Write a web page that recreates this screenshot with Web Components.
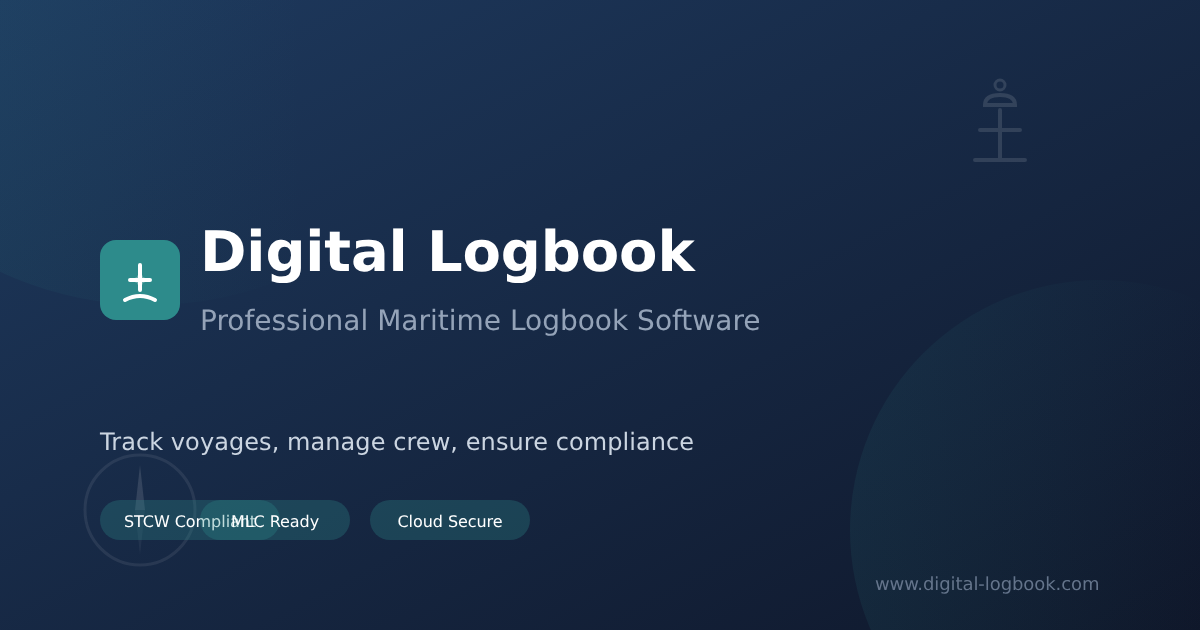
<!DOCTYPE html>
<html lang="en"><head><meta charset="utf-8"><title>Digital Logbook</title>
<style>html,body{margin:0;padding:0;background:#0f172a}</style></head>
<body>
<template id="t-card"><style>
:host{display:block;position:relative;width:1200px;height:630px;overflow:hidden;box-sizing:border-box;padding:222px 100px 0;font-family:"DejaVu Sans",sans-serif;text-rendering:geometricPrecision;background:linear-gradient(to bottom right,#1e3a5f 0%,#0f172a 100%)}
.content{position:relative;display:flex;flex-direction:column;will-change:transform}
</style><slot name="decor"></slot><div class="content"><slot></slot></div></template>

<template id="t-decor"><style>:host{display:block;position:absolute;inset:0}svg{display:block}</style>
<svg width="1200" height="630" viewBox="0 0 1200 630" fill="none" aria-hidden="true">
<defs>
<linearGradient id="tl" x1="0" y1="0" x2=".72" y2="0"><stop offset="0" stop-color="#2d8b8b" stop-opacity=".14"/><stop offset="1" stop-color="#2d8b8b" stop-opacity="0"/></linearGradient>
<linearGradient id="br" x1="0" y1="0" x2=".72" y2="0"><stop offset="0" stop-color="#2d8b8b" stop-opacity=".11"/><stop offset="1" stop-color="#2d8b8b" stop-opacity="0"/></linearGradient>
</defs>
<circle cx="150" cy="-50" r="355" fill="url(#tl)"/>
<circle cx="1100" cy="530" r="250" fill="url(#br)"/>
<g stroke="#fff" stroke-opacity=".12" stroke-width="4" stroke-linecap="round">
<circle cx="1000" cy="85" r="5" stroke-width="3"/>
<path d="M985 105Q985 95 1000 95Q1015 95 1015 105Z"/>
<path d="M1000 110V160M980 130H1020M975 160H1025"/>
<circle cx="140" cy="510" r="55" stroke-width="3" stroke-opacity=".08"/>
</g>
<path d="M140 465L145 510L135 510Z" fill="#fff" fill-opacity=".12"/>
<path d="M140 555L145 510L135 510Z" fill="#fff" fill-opacity=".05"/>
</svg></template>

<template id="t-logo"><style>:host{display:block;flex:none;width:80px;height:80px;margin-top:18px}svg{display:block}</style>
<svg width="80" height="80" viewBox="0 0 80 80" fill="none" aria-hidden="true">
<rect width="80" height="80" rx="16" fill="#2d8b8b"/>
<path d="M40 30L43 37L50 40L43 43L40 50L37 43L30 40L37 37Z" fill="#fff" fill-opacity=".3"/>
<path d="M40 25V50M30 40H50" stroke="#fff" stroke-width="4" stroke-linecap="round"/>
<path d="M25 60Q40 52 55 60" stroke="#fff" stroke-width="4" stroke-linecap="round"/>
</svg></template>

<template id="t-header"><style>
:host{display:flex;align-items:flex-start;gap:20px}
.t{display:flex;flex-direction:column}
h1{margin:0;padding-top:1px;font-size:56px;line-height:60px;font-weight:700;color:#fff;letter-spacing:-.15px}
p{margin:0;padding-top:21px;font-size:28px;line-height:34px;color:#94a3b8}
</style><slot name="logo"></slot><div class="t"><h1><slot name="title"></slot></h1><p><slot name="sub"></slot></p></div></template>

<template id="t-tagline"><style>:host{display:block;margin-top:89px;font-size:24px;line-height:30px;color:#cbd5e1;letter-spacing:.07px}</style><slot></slot></template>

<template id="t-pills"><style>:host{display:flex;gap:20px;margin-top:43px}</style><slot></slot></template>

<template id="t-pill"><style>:host{display:flex;align-items:center;justify-content:center;flex:none;height:40px;width:var(--w,150px);border-radius:20px;background:rgba(45,139,139,.3);color:#fff;font-size:16px;letter-spacing:-.05px;padding-top:2px;box-sizing:border-box;white-space:nowrap}</style><slot></slot></template>

<template id="t-url"><style>:host{display:block;text-align:right;margin-top:33px;padding-right:.5px;font-size:18px;line-height:24px;color:#64748b;letter-spacing:-.07px}</style><slot></slot></template>

<log-card>
<log-decor slot="decor"></log-decor>
<log-header><log-logo slot="logo"></log-logo><span slot="title">Digital Logbook</span><span slot="sub">Professional Maritime Logbook Software</span></log-header>
<log-tagline>Track voyages, manage crew, ensure compliance</log-tagline>
<log-pills>
<log-pill style="--w:180px">STCW Compliant</log-pill>
<log-pill style="--w:150px;margin-left:-100px">MLC Ready</log-pill>
<log-pill style="--w:160px">Cloud Secure</log-pill>
</log-pills>
<log-url>www.digital-logbook.com</log-url>
</log-card>
<script>
for(const [tag,id] of [['log-card','t-card'],['log-decor','t-decor'],['log-logo','t-logo'],['log-header','t-header'],['log-tagline','t-tagline'],['log-pills','t-pills'],['log-pill','t-pill'],['log-url','t-url']]){
 customElements.define(tag,class extends HTMLElement{constructor(){super();this.attachShadow({mode:'open'}).appendChild(document.getElementById(id).content.cloneNode(true));}});
}
</script>
</body></html>
